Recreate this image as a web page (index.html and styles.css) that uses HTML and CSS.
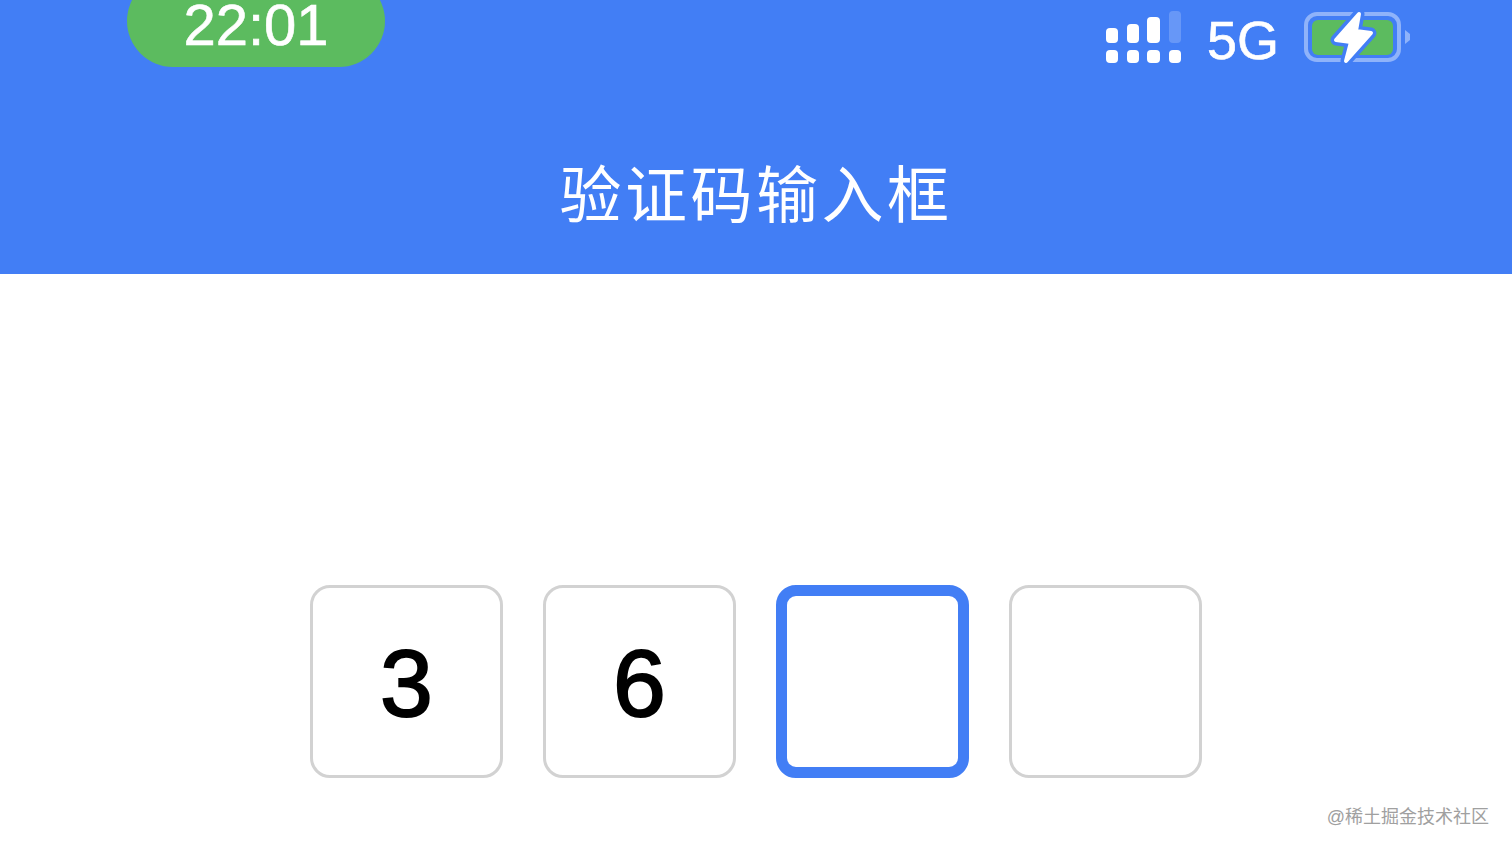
FILE: index.html

```html
<!DOCTYPE html>
<html lang="zh-CN">
<head>
    <meta charset="UTF-8">
    <meta name="viewport" content="width=device-width, initial-scale=1.0">
    <title>验证码输入框</title>
    <link rel="stylesheet" href="styles.css">
</head>
<body>

    <header class="header">
        <!-- Status bar -->
        <div class="status-bar">
            <div class="time-pill">22:01</div>
            <div class="status-icons">
                <svg class="signal" width="76" height="54" viewBox="0 0 76 54">
                    <rect x="0" y="18" width="12" height="15" rx="4" fill="#fff"/>
                    <rect x="21" y="14" width="12" height="19" rx="4" fill="#fff"/>
                    <rect x="41" y="7" width="13" height="26" rx="4" fill="#fff"/>
                    <rect x="63" y="1" width="12" height="32" rx="4" fill="#fff" fill-opacity="0.2"/>
                    <rect x="0" y="40" width="12" height="13" rx="4" fill="#fff"/>
                    <rect x="21" y="40" width="12" height="13" rx="4" fill="#fff"/>
                    <rect x="41" y="40" width="13" height="13" rx="4" fill="#fff"/>
                    <rect x="63" y="40" width="12" height="13" rx="4" fill="#fff"/>
                </svg>
                <span class="network">5G</span>
                <svg class="battery" width="106" height="54" viewBox="0 0 106 54">
                    <rect x="2" y="4" width="93" height="46" rx="11" fill="none" stroke="#8fb3fa" stroke-width="4"/>
                    <rect x="8" y="10" width="81" height="35" rx="6" fill="#5cbb5f"/>
                    <path d="M101 20 L106 24 V30 L101 34 Z" fill="#8fb3fa"/>
                    <path d="M55 4 L32 30 L47 32 L42 51 L67 23 L52 21 Z" fill="#fff" stroke="#427ef5" stroke-width="11" stroke-linejoin="round"/>
                    <path d="M55 4 L32 30 L47 32 L42 51 L67 23 L52 21 Z" fill="#fff" stroke="#fff" stroke-width="4" stroke-linejoin="round"/>
                </svg>
            </div>
        </div>
        <h1 class="title">验证码输入框</h1>
    </header>

    <!-- Code input -->
    <main class="code-row">
        <div class="code-box">3</div>
        <div class="code-box">6</div>
        <div class="code-box active"></div>
        <div class="code-box"></div>
    </main>

    <div class="watermark">@稀土掘金技术社区</div>

</body>
</html>
```

FILE: styles.css

```css
body {
    font-family: "Liberation Sans", "Noto Sans CJK SC", sans-serif;
    background-color: #fff;
    margin: 0;
    padding: 0;
    height: 851px;
    overflow: hidden;
}
.header {
    height: 274px;
    background-color: #427ef5;
    color: #fff;
    overflow: hidden;
}
.status-bar {
    display: flex;
    justify-content: space-between;
    padding: 0 102px 0 127px;
}
.time-pill {
    box-sizing: border-box;
    width: 258px;
    height: 92px;
    margin-top: -25px;
    padding-top: 26px;
    border-radius: 46px;
    background-color: #5cbb5f;
    font-size: 58px;
    line-height: 48px;
    text-align: center;
    -webkit-text-stroke: 0.6px #fff;
}
.status-icons {
    display: flex;
    align-items: flex-start;
    gap: 25px;
    padding-top: 10px;
}
.network {
    font-size: 54px;
    line-height: 60px;
    -webkit-text-stroke: 0.6px #fff;
}
.title {
    margin: 85px 0 0;
    font-family: "Noto Sans CJK SC", sans-serif;
    font-size: 62px;
    font-weight: 400;
    line-height: 72px;
    letter-spacing: 3.5px;
    text-align: center;
}
.code-row {
    display: flex;
    justify-content: center;
    gap: 40px;
    margin-top: 311px;
}
.code-box {
    box-sizing: border-box;
    width: 193px;
    height: 193px;
    padding-top: 3px;
    border: 3px solid #d2d2d2;
    border-radius: 20px;
    display: flex;
    justify-content: center;
    align-items: center;
    color: #000;
    font-size: 95px;
    -webkit-text-stroke: 2px #000;
}
.active {
    border: 11px solid #427ef5;
}
.watermark {
    position: absolute;
    right: 23px;
    bottom: 22px;
    font-size: 18px;
    line-height: 24px;
    color: #a0a0a0;
}
```
